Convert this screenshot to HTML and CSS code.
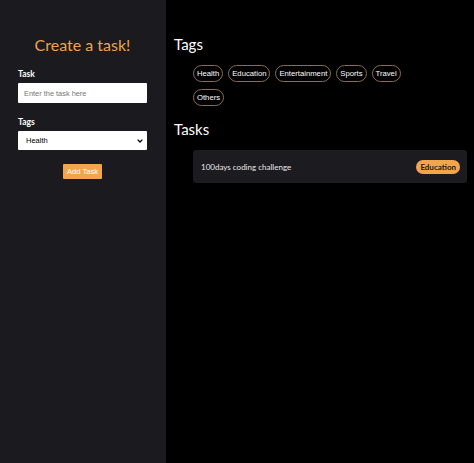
FILE: index.html
```html
<!DOCTYPE html>
<html>
<head>
<meta charset="utf-8">
<link rel="stylesheet" href="styles.css">
</head>
<body>
<div class="app">
  <aside class="sidebar">
    <h1 class="title">Create a task!</h1>
    <form class="form">
      <label class="label">Task</label>
      <input class="input" type="text" placeholder="Enter the task here">
      <label class="label label-tags">Tags</label>
      <div class="select-wrap">
        <select class="select">
          <option>Health</option>
          <option>Education</option>
        </select>
        <svg class="chevron" width="6" height="4" viewBox="0 0 6 4"><path d="M0.6 0.6 L3 3 L5.4 0.6" fill="none" stroke="#000" stroke-width="1.3"/></svg>
      </div>
      <div class="btn-row"><button class="add-btn" type="button">Add Task</button></div>
    </form>
  </aside>
  <main class="main">
    <h2 class="heading">Tags</h2>
    <div class="tags">
      <button class="tag">Health</button>
      <button class="tag">Education</button>
      <button class="tag">Entertainment</button>
      <button class="tag">Sports</button>
      <button class="tag">Travel</button>
      <button class="tag">Others</button>
    </div>
    <h2 class="heading heading-tasks">Tasks</h2>
    <div class="tasks">
      <div class="task">
        <span class="task-text">100days coding challenge</span>
        <span class="badge">Education</span>
      </div>
    </div>
  </main>
</div>
</body>
</html>
```

FILE: styles.css
```css
* { box-sizing: border-box; }
html, body { margin: 0; padding: 0; height: 100%; background: #000; }
body { font-family: "Lato", "Open Sans", sans-serif; color: #fff; }
.app { display: flex; min-height: 463px; }
.sidebar {
  width: 166px;
  background: #1b1a1e;
  padding: 34px 19px 0 18px;
}
.title {
  margin: 0;
  text-align: center;
  font-weight: 400;
  font-size: 16px;
  color: #f0a24c;
  line-height: 22px;
}
.form { display: flex; flex-direction: column; margin-top: 13px; }
.label { font-size: 8.5px; font-weight: 700; line-height: 10px; margin-bottom: 4px; }
.label-tags { margin-top: 14px; margin-bottom: 4px; }
.input {
  height: 20px;
  width: 129px;
  border: none;
  border-radius: 1px;
  padding: 0 6px;
  font-family: "Liberation Sans", Arial, sans-serif;
  font-size: 7.4px;
  background: #fff;
}
.input::placeholder { color: #757575; }
.select-wrap { position: relative; width: 129px; }
.select {
  appearance: none;
  -webkit-appearance: none;
  display: block;
  height: 19px;
  width: 129px;
  border: none;
  border-radius: 1px;
  padding: 0 8px;
  font-family: "Liberation Sans", Arial, sans-serif;
  font-size: 7.5px;
  background: #fff;
  color: #000;
}
.chevron { position: absolute; right: 4px; top: 8px; pointer-events: none; }
.btn-row { display: flex; justify-content: center; margin-top: 14px; }
.add-btn {
  height: 15px;
  padding: 0 4px;
  background: #f3a54a;
  color: #fff;
  border: none;
  border-radius: 1px;
  font-family: "Liberation Sans", Arial, sans-serif;
  font-size: 7.6px;
}
.main { flex: 1; padding: 34px 7px 0 8px; }
.heading { margin: 0; font-weight: 400; font-size: 15px; line-height: 20px; color: #fff; }
.heading-tasks { margin-top: 13px; }
.tags {
  display: flex; flex-wrap: wrap; gap: 7px 5px;
  padding-left: 19px; margin-top: 11px; width: 250px;
}
.tag {
  height: 17px;
  padding: 0 3px;
  background: #000;
  color: #fff;
  border: 1px solid #8a6d54;
  border-radius: 9px;
  font-family: "Liberation Sans", Arial, sans-serif;
  font-size: 7.7px;
}
.tasks { padding-left: 19px; margin-top: 11px; }
.task {
  display: flex; justify-content: space-between; align-items: center;
  height: 33px;
  background: #1c1b20;
  border-radius: 3px;
  padding: 0 7px 0 8px;
}
.task-text { font-size: 8px; color: #e8e8e8; }
.badge {
  background: #f3a54a;
  color: #1b1a1e;
  font-size: 8px;
  font-weight: 700;
  padding: 2px 4px;
  border-radius: 7px;
  line-height: 10px;
}
```
